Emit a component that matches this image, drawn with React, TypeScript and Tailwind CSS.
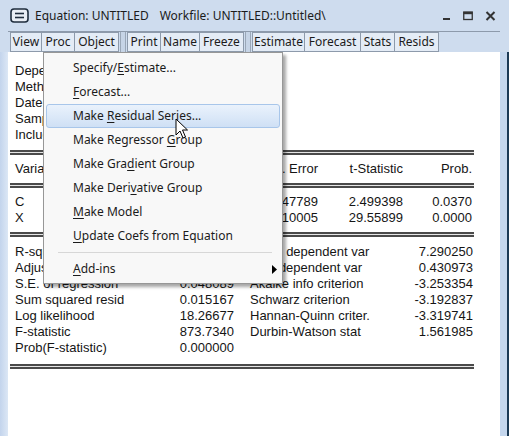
import React from 'react';

const info = [
  'Dependent Variable: LPRICE',
  'Method: Least Squares',
  'Date: 03/12/14   Time: 10:21',
  'Sample: 1 12',
  'Included observations: 12',
];

const coefRows = [
  ['C', '0.119397', '0.047789', '2.499398', '0.0370'],
  ['X', '0.295747', '0.010005', '29.55899', '0.0000'],
];

const stats = [
  ['R-squared', '0.988682', 'Mean dependent var', '7.290250'],
  ['Adjusted R-squared', '0.987550', 'S.D. dependent var', '0.430973'],
  ['S.E. of regression', '0.048089', 'Akaike info criterion', '-3.253354'],
  ['Sum squared resid', '0.015167', 'Schwarz criterion', '-3.192837'],
  ['Log likelihood', '18.26677', 'Hannan-Quinn criter.', '-3.319741'],
  ['F-statistic', '873.7340', 'Durbin-Watson stat', '1.561985'],
  ['Prob(F-statistic)', '0.000000', '', ''],
];

function DoubleRule() {
  return <div className="ml-[2px] w-[464px] h-[5px] border-y-2 border-[#4a4a4a] bg-[#e6e6e6]" />;
}

function ToolButton({ label, w }: { label: string; w: string }) {
  return (
    <div className={`${w} h-full flex items-center justify-center border-y border-r first:border-l border-[#8d9aab] bg-[#e4ecf6]`}>
      {label}
    </div>
  );
}

function Groove() {
  return <div className="w-[6px] h-full mx-[1px] border-x border-[#9aa7b7] bg-[#c6d4e6]" />;
}

function MenuItem({ pre, u, post, active }: { pre: string; u: string; post: string; active?: boolean }) {
  return (
    <div
      className={`h-[24px] mx-[2px] flex items-center pl-[26px] rounded-[3px] border ${
        active ? 'border-[#a8c6ea] bg-gradient-to-b from-[#eaf2fc] to-[#cfe0f5]' : 'border-transparent'
      }`}
    >
      <span className="whitespace-pre">
        {pre}
        <span className="underline underline-offset-2">{u}</span>
        {post}
      </span>
    </div>
  );
}

function Cursor() {
  return (
    <svg className="absolute left-[175px] top-[118px]" width="14" height="22" viewBox="0 0 14 22">
      <path d="M1 1 L1 17 L5 13 L8 20 L10.5 19 L7.5 12 L12.5 12 Z" fill="#fff" stroke="#000" strokeWidth="1" strokeLinejoin="round" />
    </svg>
  );
}

export default function App() {
  return (
    <div className="relative w-[509px] h-[436px] overflow-hidden bg-[#cedcee] flex flex-col font-['Noto_Sans',sans-serif] text-[#1b1b1b]">
      {/* title bar */}
      <div className="h-[31px] flex items-center pl-[10px] pr-[13px] shrink-0">
        <svg width="19" height="15" viewBox="0 0 19 15" className="shrink-0">
          <rect x="1" y="1" width="17" height="13" rx="3" fill="#e9eef5" stroke="#1f2d3d" strokeWidth="1.6" />
          <line x1="5" y1="5.5" x2="14" y2="5.5" stroke="#1f2d3d" strokeWidth="1.6" />
          <line x1="5" y1="9.5" x2="14" y2="9.5" stroke="#1f2d3d" strokeWidth="1.6" />
        </svg>
        <span className="ml-[6px] text-[12px]">Equation: UNTITLED</span>
        <span className="ml-[11px] text-[12px]">{'Workfile: UNTITLED::Untitled\\'}</span>
        <div className="ml-auto flex items-center gap-[12px]">
          <svg width="9" height="10" viewBox="0 0 9 10"><rect x="1" y="7" width="7" height="2" fill="#333" /></svg>
          <svg width="10" height="10" viewBox="0 0 10 10"><rect x="0.75" y="1" width="8.5" height="7.5" fill="none" stroke="#333" strokeWidth="1.3" /><rect x="0.5" y="1" width="9" height="2.2" fill="#333" /></svg>
          <svg width="11" height="10" viewBox="0 0 11 10"><path d="M1.5 1 L9.5 9 M9.5 1 L1.5 9" stroke="#333" strokeWidth="2" /></svg>
        </div>
      </div>

      {/* toolbar */}
      <div className="h-[21px] ml-[8px] mr-[9px] shrink-0 border-t border-[#8d9aab] flex items-stretch text-[12px] leading-none">
        <div className="flex ml-[2px]">
          <ToolButton label="View" w="w-[32px]" />
          <ToolButton label="Proc" w="w-[33px]" />
          <ToolButton label="Object" w="w-[44px]" />
        </div>
        <Groove />
        <div className="flex">
          <ToolButton label="Print" w="w-[34px]" />
          <ToolButton label="Name" w="w-[39px]" />
          <ToolButton label="Freeze" w="w-[44px]" />
        </div>
        <Groove />
        <div className="flex">
          <ToolButton label="Estimate" w="w-[53px]" />
          <ToolButton label="Forecast" w="w-[56px]" />
          <ToolButton label="Stats" w="w-[34px]" />
          <ToolButton label="Resids" w="w-[44px]" />
        </div>
      </div>

      {/* body */}
      <div className="flex-1 flex">
        <div className="w-[8px] bg-gradient-to-r from-[#c3d4ec] to-[#dce7f5]" />
        <div className="flex-1 bg-white pt-[11px] text-[13px] leading-[16px] text-[#151515] font-['Liberation_Sans',Arial,sans-serif]">
          <div className="pl-[7px]">
            {info.map((t) => (
              <div key={t} className="whitespace-pre">{t}</div>
            ))}
          </div>
          <div className="mt-[7px]"><DoubleRule /></div>
          <div className="mt-[6px] pl-[7px] grid grid-cols-[145px_80px_78px_85px_69px]">
            <div>Variable</div>
            <div className="text-right">Coefficient</div>
            <div className="text-right">Std. Error</div>
            <div className="text-right">t-Statistic</div>
            <div className="text-right">Prob.</div>
          </div>
          <div className="mt-[6px]"><DoubleRule /></div>
          <div className="mt-[6px] pl-[7px] grid grid-cols-[145px_80px_78px_85px_69px]">
            {coefRows.map((r) =>
              r.map((c, i) => (
                <div key={r[0] + i} className={i === 0 ? '' : 'text-right'}>{c}</div>
              ))
            )}
          </div>
          <div className="mt-[6px]"><DoubleRule /></div>
          <div className="mt-[7px] pl-[7px] grid grid-cols-[140px_79px_166px_73px]">
            {stats.map((r) => (
              <React.Fragment key={r[0]}>
                <div>{r[0]}</div>
                <div className="text-right">{r[1]}</div>
                <div className="pl-[16px]">{r[2]}</div>
                <div className="text-right">{r[3]}</div>
              </React.Fragment>
            ))}
          </div>
          <div className="mt-[8px]"><DoubleRule /></div>
        </div>
        <div className="w-[9px] bg-[#c5d7ee] border-r-2 border-[#1c3a55]" />
      </div>

      {/* Proc menu */}
      <div className="absolute left-[43px] top-[52px] w-[240px] pt-[3px] pb-[2px] bg-[#f8f8f8] border border-[#979797] shadow-[3px_3px_3px_rgba(0,0,0,0.35)] text-[12px] text-[#1b1b1b]">
        <MenuItem pre="Specify/" u="E" post="stimate..." />
        <MenuItem pre="" u="F" post="orecast..." />
        <MenuItem pre="Make " u="R" post="esidual Series..." active />
        <MenuItem pre="Make Regressor " u="G" post="roup" />
        <MenuItem pre="Make Gra" u="d" post="ient Group" />
        <MenuItem pre="Make Deri" u="v" post="ative Group" />
        <MenuItem pre="" u="M" post="ake Model" />
        <MenuItem pre="" u="U" post="pdate Coefs from Equation" />
        <div className="h-[9px] flex items-center pl-[14px] pr-[10px]">
          <div className="w-full h-px bg-[#d7d7d7]" />
        </div>
        <div className="relative">
          <MenuItem pre="" u="A" post="dd-ins" />
          <svg className="absolute right-[5px] top-[8px]" width="5" height="9" viewBox="0 0 5 9"><path d="M0 0 L5 4.5 L0 9 Z" fill="#000" /></svg>
        </div>
      </div>

      <Cursor />
    </div>
  );
}
